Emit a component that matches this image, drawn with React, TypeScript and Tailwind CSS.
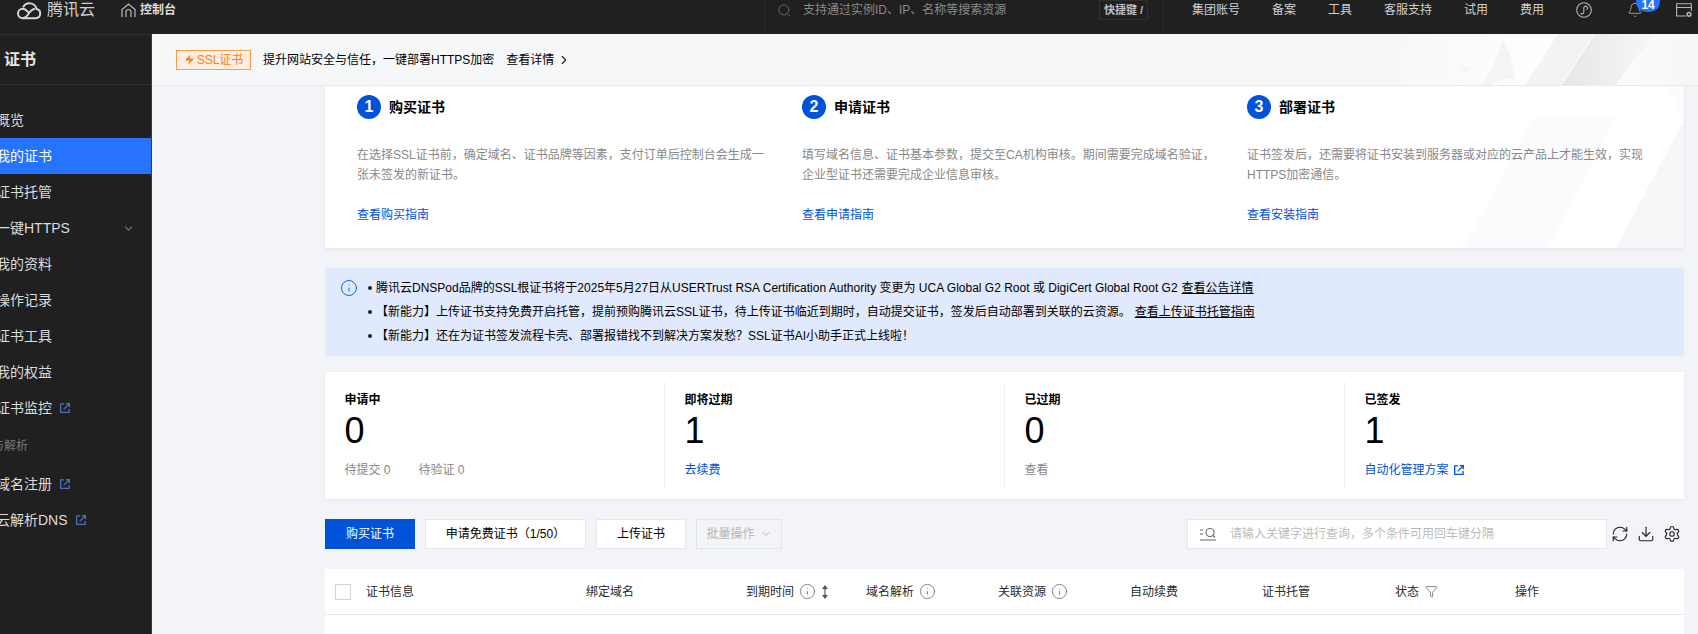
import { Bell, ChevronDown, ChevronRight, Download, Funnel, Info, RefreshCw, Search, Settings, Zap } from "lucide-react";

const font = "font-['Liberation_Sans','Noto_Sans_CJK_SC',sans-serif]";

function ExtLink({ className = "text-[#4a72c0]" }: { className?: string }) {
  return (
    <svg viewBox="0 0 10 10" className={`h-[10px] w-[10px] ${className}`} fill="none" stroke="currentColor" strokeWidth="1.3">
      <path d="M4 .9H.7v8.4h8.4V6" />
      <path d="M3.6 6.4 9 1M5.8.7h3.5v3.5" />
    </svg>
  );
}

function Logo() {
  return (
    <svg viewBox="0 0 27 20" className="h-[20px] w-[26px] text-[#d8d8d8]" fill="none" stroke="currentColor" strokeWidth="2" strokeLinejoin="round">
      <path d="M7 18.5h13.5a4.8 4.8 0 0 0 .8-9.5A7.4 7.4 0 0 0 7.4 7.2" />
      <path d="M7 18.5a4.9 4.9 0 0 1 0-9.8c2.4 0 4 1.6 5.4 3.2l1.2 1.3M7 18.5c2.5 0 4.4-1.7 6.6-5.3 1.700-2.700 3.400-4.300 6-4.300" />
    </svg>
  );
}

function Home() {
  return (
    <svg viewBox="0 0 15 15" className="h-[15px] w-[15px] text-[#bbbbbb]" fill="none" stroke="currentColor" strokeWidth="1.2">
      <path d="M1 14V6.500L7.500 1 14 6.500V14" />
      <path d="M5 14V9a2.500 2.500 0 0 1 5 0v5" />
    </svg>
  );
}

function MiniProgram() {
  return (
    <svg viewBox="0 0 16 16" className="h-[16px] w-[16px] text-[#b5b5b5]" fill="none" stroke="currentColor" strokeWidth="1.1">
      <circle cx="8" cy="8" r="7.300" />
      <path d="M4.600 11.200a1.800 1.800 0 0 0 3.200-1.200V6a1.900 1.900 0 1 1 2.900 1.700" />
    </svg>
  );
}

function BoxGear() {
  return (
    <svg viewBox="0 0 16 14" className="h-[14px] w-[16px] text-[#b5b5b5]" fill="none" stroke="currentColor" strokeWidth="1.1">
      <path d="M10 13H.6V.7h14.800V8" />
      <path d="M.6 4.500h14.800" />
      <circle cx="13" cy="11.300" r="1.900" strokeWidth="1.500" />
    </svg>
  );
}

function SortArrows() {
  return (
    <svg viewBox="0 0 8 14" className="h-[14px] w-[8px] text-[#555]" fill="currentColor">
      <path d="M4 0 7 4H1zM4 14 1 10h6z" />
      <path d="M3.400 3h1.200v8H3.400z" />
    </svg>
  );
}

function SearchList() {
  return (
    <svg viewBox="0 0 16 14" className="h-[14px] w-[16px] text-[#666]" fill="none" stroke="currentColor" strokeWidth="1.100">
      <path d="M0 3h3M0 7h3M0 13h16" />
      <circle cx="10" cy="5.500" r="4" />
      <path d="m13 8.500 2 2" />
    </svg>
  );
}

const topLinks = ["集团账号", "备案", "工具", "客服支持", "试用", "费用"];

function TopBar() {
  return (
    <header className="flex h-[34px] shrink-0 items-stretch bg-[#202020]">
      <div className="flex h-[20px] w-[764px] shrink-0 items-center pl-[16px]">
        <Logo />
        <span className="ml-[5px] text-[16px] text-[#cfcfcf]">腾讯云</span>
        <span className="ml-[26px]"><Home /></span>
        <span className="ml-[4px] text-[12px] font-bold text-[#dddddd]">控制台</span>
      </div>
      <div className="flex w-[400px] shrink-0 items-start border-x border-[#2b2b2b] pl-[12px]">
        <div className="flex h-[20px] items-center">
          <Search size={15} strokeWidth={1.200} className="text-[#777]" />
          <span className="ml-[11px] w-[296px] text-[12px] text-[#8a8a8a]">支持通过实例ID、IP、名称等搜索资源</span>
          <span className="flex h-[20px] w-[49px] items-center justify-center border border-[#2e2e2e] text-[11px] font-bold text-[#bdbdbd]">快捷键 /</span>
        </div>
      </div>
      <div className="flex h-[20px] items-center pl-[28px]">
        <nav className="flex items-center gap-[32px] text-[12px] text-[#d0d0d0]">
          {topLinks.map((t) => (
            <span key={t}>{t}</span>
          ))}
        </nav>
        <span className="ml-[32px]"><MiniProgram /></span>
        <span className="relative ml-[35px]">
          <Bell size={16} strokeWidth={1.200} className="text-[#b5b5b5]" />
          <span className="absolute left-[9px] top-[-11px] flex h-[21px] w-[24px] items-center justify-center rounded-full bg-[#2673ff] pt-[6px] text-[12px] font-bold text-white">14</span>
        </span>
        <span className="ml-[33px]"><BoxGear /></span>
      </div>
    </header>
  );
}

type NavItem = { label: string; ext?: boolean; active?: boolean; chevron?: boolean };

function SideItem({ label, ext, active, chevron }: NavItem) {
  return (
    <div className={`flex h-[36px] items-center text-[14px] ${active ? "bg-[#2673ff] text-white" : "text-[#dcdcdc]"}`}>
      <span className="ml-[-4px] whitespace-nowrap">{label}</span>
      {ext && <span className="ml-[8px]"><ExtLink /></span>}
      {chevron && <ChevronDown size={13} className="ml-[52px] text-[#777]" />}
    </div>
  );
}

function Sidebar() {
  return (
    <aside className="w-[152px] shrink-0 overflow-hidden border-r border-[#3c3c3c] bg-[#202020]">
      <div className="flex h-[51px] items-center border-y border-[#2f2f2f] pl-[4px] text-[16px] font-bold text-[#e6e6e6]">证书</div>
      <div className="pt-[17px]">
        <SideItem label="概览" />
        <SideItem label="我的证书" active />
        <SideItem label="证书托管" />
        <SideItem label="一键HTTPS" chevron />
        <SideItem label="我的资料" />
        <SideItem label="操作记录" />
        <SideItem label="证书工具" />
        <SideItem label="我的权益" />
        <SideItem label="证书监控" ext />
        <div className="ml-[-32px] flex h-[40px] items-center text-[12px] text-[#777]">域名与解析</div>
        <SideItem label="域名注册" ext />
        <SideItem label="云解析DNS" ext />
      </div>
    </aside>
  );
}

function Banner() {
  return (
    <div className="relative flex h-[52px] shrink-0 items-center overflow-hidden border-b border-[#e8e9ee] bg-[#f6f7f9] pl-[24px] text-[12px] text-black">
      <svg viewBox="0 0 348 51" className="absolute right-0 top-0 h-[51px] w-[348px]">
        <defs>
          <linearGradient id="sheen" x1="0" x2="1" y1="0" y2="0">
            <stop offset="0" stopColor="#f6f7f9" />
            <stop offset="0.55" stopColor="#ffffff" />
            <stop offset="0.62" stopColor="#ffffff" />
            <stop offset="1" stopColor="#f6f6f7" />
          </linearGradient>
          <linearGradient id="band" x1="0" x2="1" y1="0" y2="0">
            <stop offset="0" stopColor="#e5e6e8" />
            <stop offset="1" stopColor="#f6f7f8" />
          </linearGradient>
        </defs>
        <path d="M60 0H348V51H30Z" fill="url(#sheen)" />
        <path d="M208 0h36l-33 51h-36Z" fill="#f2f3f4" />
        <path d="M245 0h60l-40 51H212Z" fill="url(#band)" />
        <path d="M153 6 160 20 165 44 150 46 140 51H132L143 33Z" fill="#f3f4f5" />
        <path d="M110 33h12l-6 8Z" fill="#f5f5f7" />
      </svg>
      <span className="relative flex h-[20px] w-[75px] items-center justify-center gap-[2px] border border-[#ff9c4a] bg-[#ffeee0] text-[#f5811f]">
        <Zap size={11} fill="currentColor" strokeWidth={0} />
        SSL证书
      </span>
      <span className="relative ml-[12px]">提升网站安全与信任，一键部署HTTPS加密</span>
      <span className="relative ml-[12px]">查看详情</span>
      <ChevronRight size={14} className="relative ml-[3px] text-[#222]" />
    </div>
  );
}

const steps = [
  {
    n: 1,
    title: "购买证书",
    desc: "在选择SSL证书前，确定域名、证书品牌等因素，支付订单后控制台会生成一张未签发的新证书。",
    link: "查看购买指南",
  },
  {
    n: 2,
    title: "申请证书",
    desc: "填写域名信息、证书基本参数，提交至CA机构审核。期间需要完成域名验证，企业型证书还需要完成企业信息审核。",
    link: "查看申请指南",
  },
  {
    n: 3,
    title: "部署证书",
    desc: "证书签发后，还需要将证书安装到服务器或对应的云产品上才能生效，实现HTTPS加密通信。",
    link: "查看安装指南",
  },
];

function StepsCard() {
  return (
    <section className="relative flex h-[162px] shrink-0 overflow-hidden bg-white pl-[32px] pt-[9px] shadow-[0_1px_3px_rgba(54,58,80,0.08)]">
      <svg viewBox="0 0 340 162" className="absolute right-0 top-0 h-[162px] w-[340px]">
        <path d="M287 0h36l17 34V0Z" fill="#fcfcfd" />
        <path d="M120 162 189 32h83L203 162Z" fill="#fbfbfd" />
        <path d="M272 162 340 34V162Z" fill="#f6f7f9" />
      </svg>
      {steps.map((s) => (
        <div key={s.n} className="relative w-[445px] shrink-0">
          <div className="flex h-[24px] items-center">
            <span className="flex h-[24px] w-[24px] items-center justify-center rounded-full bg-[#0052d9] text-[16px] font-bold text-white">{s.n}</span>
            <span className="ml-[8px] text-[14px] font-bold text-black">{s.title}</span>
          </div>
          <p className="mt-[26px] w-[416px] text-[12px] leading-[20px] text-[#888]">{s.desc}</p>
          <p className="mt-[20px] text-[12px] leading-[20px] text-[#0052d9]">{s.link}</p>
        </div>
      ))}
    </section>
  );
}

function Dot() {
  return <span className="mr-[4px] h-[4px] w-[4px] shrink-0 rounded-full bg-[#222]" />;
}

function Notice() {
  return (
    <section className="mt-[20px] flex h-[88px] shrink-0 bg-[#e1e9fc] pl-[15px] pt-[8px] text-[12px] text-black">
      <span className="flex h-[24px] items-center">
        <Info size={18} strokeWidth={1.200} className="text-[#0052d9]" />
      </span>
      <div className="ml-[10px]">
        <div className="flex h-[24px] items-center">
          <Dot />
          腾讯云DNSPod品牌的SSL根证书将于2025年5月27日从USERTrust RSA Certification Authority 变更为 UCA Global G2 Root 或 DigiCert Global Root G2
          <span className="ml-[4px] underline">查看公告详情</span>
        </div>
        <div className="flex h-[24px] items-center">
          <Dot />
          【新能力】上传证书支持免费开启托管，提前预购腾讯云SSL证书，待上传证书临近到期时，自动提交证书，签发后自动部署到关联的云资源。
          <span className="ml-[4px] underline">查看上传证书托管指南</span>
        </div>
        <div className="flex h-[24px] items-center">
          <Dot />
          【新能力】还在为证书签发流程卡壳、部署报错找不到解决方案发愁？SSL证书AI小助手正式上线啦！
        </div>
      </div>
    </section>
  );
}

function Stat({ label, value, last, children }: { label: string; value: number; last?: boolean; children: React.ReactNode }) {
  return (
    <div className={`h-[107px] w-[340px] shrink-0 pl-[19.500px] ${last ? "" : "border-r border-[#eeeff3]"}`}>
      <p className="pt-[8px] text-[12px] font-bold leading-[20px] text-black">{label}</p>
      <p className="mt-[1px] text-[36px] leading-[40px] text-black">{value}</p>
      <div className="mt-[9px] flex h-[20px] items-center text-[12px]">{children}</div>
    </div>
  );
}

function Stats() {
  return (
    <section className="mt-[16px] flex h-[127px] shrink-0 bg-white py-[10px] shadow-[0_1px_3px_rgba(54,58,80,0.08)]">
      <Stat label="申请中" value={0}>
        <span className="text-[#888]">待提交 0</span>
        <span className="ml-[28px] text-[#888]">待验证 0</span>
      </Stat>
      <Stat label="即将过期" value={1}>
        <span className="text-[#0052d9]">去续费</span>
      </Stat>
      <Stat label="已过期" value={0}>
        <span className="text-[#888]">查看</span>
      </Stat>
      <Stat label="已签发" value={1} last>
        <span className="text-[#0052d9]">自动化管理方案</span>
        <span className="ml-[5px]"><ExtLink className="text-[#0052d9]" /></span>
      </Stat>
    </section>
  );
}

function Toolbar() {
  return (
    <div className="mt-[20px] flex h-[30px] shrink-0 items-center text-[12px]">
      <button className="flex h-[30px] w-[90px] items-center justify-center bg-[#0052d9] text-white">购买证书</button>
      <button className="ml-[10px] flex h-[30px] w-[161px] items-center justify-center border border-[#e6e8ef] bg-white text-black">申请免费证书（1/50）</button>
      <button className="ml-[10px] flex h-[30px] w-[90px] items-center justify-center border border-[#e6e8ef] bg-white text-black">上传证书</button>
      <button className="ml-[10px] flex h-[30px] w-[86px] items-center justify-center gap-[5px] border border-[#e3e5ec] bg-[#f3f4f7] text-[#b5b5b5]">
        批量操作
        <ChevronDown size={12} />
      </button>
      <div className="ml-auto flex h-[30px] w-[420px] items-center border border-[#e6e8ef] bg-white pl-[12px] text-[#bbb]">
        <SearchList />
        <span className="ml-[14px]">请输入关键字进行查询，多个条件可用回车键分隔</span>
      </div>
      <div className="ml-[4px] mr-[3px] flex items-center gap-[8px] text-[#222]">
        <RefreshCw size={18} strokeWidth={1.500} />
        <Download size={18} strokeWidth={1.500} />
        <Settings size={18} strokeWidth={1.500} />
      </div>
    </div>
  );
}

function Th({ label, info, className = "" }: { label: string; info?: boolean; className?: string }) {
  return (
    <div className={`flex items-center ${className}`}>
      {label}
      {info && <Info size={17} strokeWidth={1.100} className="ml-[5px] text-[#666]" />}
    </div>
  );
}

function TableHead() {
  return (
    <section className="mt-[20px] flex-1 bg-white">
      <div className="flex h-[46px] items-center border-b border-[#e7e8ef] pl-[10px] text-[12px] text-[#2b2b2b]">
        <span className="mr-[15px] h-[16px] w-[16px] shrink-0 border border-[#d0d5dd]" />
        <div className="grid flex-1 grid-cols-[220px_160px_120px_132px_132px_132px_133px_120px_1fr]">
          <Th label="证书信息" />
          <Th label="绑定域名" />
          <div className="flex items-center">
            <Th label="到期时间" info />
            <span className="ml-[5px]"><SortArrows /></span>
          </div>
          <Th label="域名解析" info />
          <Th label="关联资源" info />
          <Th label="自动续费" />
          <Th label="证书托管" />
          <div className="flex items-center">
            状态
            <Funnel size={13} strokeWidth={1.300} className="ml-[6px] text-[#555]" />
          </div>
          <Th label="操作" />
        </div>
      </div>
    </section>
  );
}

export default function App() {
  return (
    <div className={`flex h-[634px] w-[1698px] flex-col overflow-hidden bg-[#f3f4f7] ${font}`}>
      <TopBar />
      <div className="flex min-h-0 flex-1">
        <Sidebar />
        <main className="flex min-w-0 flex-1 flex-col">
          <Banner />
          <div className="flex min-h-0 flex-1 flex-col overflow-hidden pl-[173px] pr-[14px]">
            <StepsCard />
            <Notice />
            <Stats />
            <Toolbar />
            <TableHead />
          </div>
        </main>
      </div>
    </div>
  );
}
